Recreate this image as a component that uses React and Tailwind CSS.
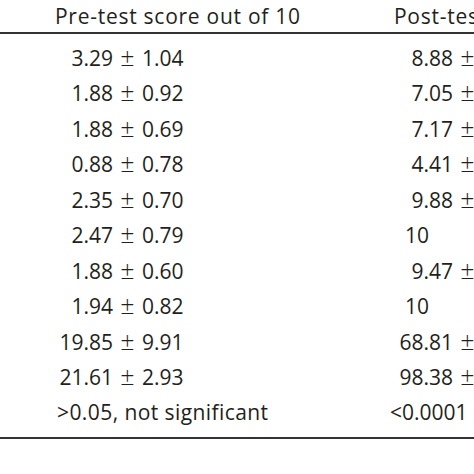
import React from "react";

const rows = [
  ["3.29", "1.04", "8.88", "0.92"],
  ["1.88", "0.92", "7.05", "1.01"],
  ["1.88", "0.69", "7.17", "0.81"],
  ["0.88", "0.78", "4.41", "1.06"],
  ["2.35", "0.70", "9.88", "0.33"],
  ["2.47", "0.79", "10", null],
  ["1.88", "0.60", "9.47", "0.80"],
  ["1.94", "0.82", "10", null],
  ["19.85", "9.91", "68.81", "5.06"],
  ["21.61", "2.93", "98.38", "3.45"],
];

function PM() {
  return (
    <span className="w-[29px] shrink-0 text-center text-[25px] leading-[18px] font-light">±</span>
  );
}

export default function App() {
  return (
    <div
      className="w-[474px] h-[474px] overflow-hidden bg-white text-[#231f20] text-[21px] leading-none"
      style={{ fontFamily: "'Open Sans', Lato, sans-serif" }}
    >
      <div className="flex h-[32px] items-center whitespace-nowrap tracking-[0.035em]">
        <div className="w-[394px] shrink-0 pl-[55px]">Pre-test score out of 10</div>
        <div className="shrink-0">Post-test score out of 10</div>
      </div>
      <div className="h-[2px] bg-[#333]" />
      <div className="pt-[6px] pb-[6px]">
        {rows.map(([a, b, c, d], i) => (
          <div key={i} className="flex h-[35.5px] items-center whitespace-nowrap">
            <div className="flex w-[300px] shrink-0 items-baseline">
              <span className="w-[113px] shrink-0 text-right">{a}</span>
              <PM />
              <span className="shrink-0">{b}</span>
            </div>
            {d ? (
              <div className="flex shrink-0 items-baseline">
                <span className="w-[153px] shrink-0 text-right">{c}</span>
                <PM />
                <span className="shrink-0">{d}</span>
              </div>
            ) : (
              <div className="shrink-0 pl-[105px]">{c}</div>
            )}
          </div>
        ))}
        <div className="flex h-[35.5px] items-center whitespace-nowrap">
          <div className="w-[390px] shrink-0 pl-[57px] tracking-[0.02em]">&gt;0.05, not significant</div>
          <div className="shrink-0">&lt;0.0001</div>
        </div>
      </div>
      <div className="h-[2px] bg-[#333]" />
    </div>
  );
}
